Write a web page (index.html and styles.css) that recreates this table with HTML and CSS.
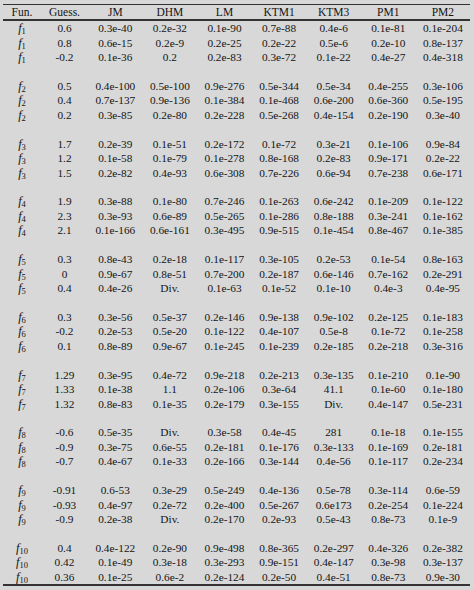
FILE: index.html
```html
<!DOCTYPE html>
<html>
<head>
<meta charset="utf-8">
<link rel="stylesheet" href="styles.css">
</head>
<body>
<table class="results">
<colgroup>
<col class="c-fun"><col class="c-guess"><col class="c-m"><col class="c-m"><col class="c-m"><col class="c-m"><col class="c-m"><col class="c-m"><col class="c-m">
</colgroup>
<thead>
<tr><th>Fun.</th><th>Guess.</th><th>JM</th><th>DHM</th><th>LM</th><th>KTM1</th><th>KTM3</th><th>PM1</th><th>PM2</th></tr>
</thead>
<tbody>
<tr><td><i>f</i><sub>1</sub></td><td>0.6</td><td>0.3e-40</td><td>0.2e-32</td><td>0.1e-90</td><td>0.7e-88</td><td>0.4e-6</td><td>0.1e-81</td><td>0.1e-204</td></tr>
<tr><td><i>f</i><sub>1</sub></td><td>0.8</td><td>0.6e-15</td><td>0.2e-9</td><td>0.2e-25</td><td>0.2e-22</td><td>0.5e-6</td><td>0.2e-10</td><td>0.8e-137</td></tr>
<tr><td><i>f</i><sub>1</sub></td><td>-0.2</td><td>0.1e-36</td><td>0.2</td><td>0.2e-83</td><td>0.3e-72</td><td>0.1e-22</td><td>0.4e-27</td><td>0.4e-318</td></tr>
<tr class="gap"><td colspan="9"></td></tr>
<tr><td><i>f</i><sub>2</sub></td><td>0.5</td><td>0.4e-100</td><td>0.5e-100</td><td>0.9e-276</td><td>0.5e-344</td><td>0.5e-34</td><td>0.4e-255</td><td>0.3e-106</td></tr>
<tr><td><i>f</i><sub>2</sub></td><td>0.4</td><td>0.7e-137</td><td>0.9e-136</td><td>0.1e-384</td><td>0.1e-468</td><td>0.6e-200</td><td>0.6e-360</td><td>0.5e-195</td></tr>
<tr><td><i>f</i><sub>2</sub></td><td>0.2</td><td>0.3e-85</td><td>0.2e-80</td><td>0.2e-228</td><td>0.5e-268</td><td>0.4e-154</td><td>0.2e-190</td><td>0.3e-40</td></tr>
<tr class="gap"><td colspan="9"></td></tr>
<tr><td><i>f</i><sub>3</sub></td><td>1.7</td><td>0.2e-39</td><td>0.1e-51</td><td>0.2e-172</td><td>0.1e-72</td><td>0.3e-21</td><td>0.1e-106</td><td>0.9e-84</td></tr>
<tr><td><i>f</i><sub>3</sub></td><td>1.2</td><td>0.1e-58</td><td>0.1e-79</td><td>0.1e-278</td><td>0.8e-168</td><td>0.2e-83</td><td>0.9e-171</td><td>0.2e-22</td></tr>
<tr><td><i>f</i><sub>3</sub></td><td>1.5</td><td>0.2e-82</td><td>0.4e-93</td><td>0.6e-308</td><td>0.7e-226</td><td>0.6e-94</td><td>0.7e-238</td><td>0.6e-171</td></tr>
<tr class="gap"><td colspan="9"></td></tr>
<tr><td><i>f</i><sub>4</sub></td><td>1.9</td><td>0.3e-88</td><td>0.1e-80</td><td>0.7e-246</td><td>0.1e-263</td><td>0.6e-242</td><td>0.1e-209</td><td>0.1e-122</td></tr>
<tr><td><i>f</i><sub>4</sub></td><td>2.3</td><td>0.3e-93</td><td>0.6e-89</td><td>0.5e-265</td><td>0.1e-286</td><td>0.8e-188</td><td>0.3e-241</td><td>0.1e-162</td></tr>
<tr><td><i>f</i><sub>4</sub></td><td>2.1</td><td>0.1e-166</td><td>0.6e-161</td><td>0.3e-495</td><td>0.9e-515</td><td>0.1e-454</td><td>0.8e-467</td><td>0.1e-385</td></tr>
<tr class="gap"><td colspan="9"></td></tr>
<tr><td><i>f</i><sub>5</sub></td><td>0.3</td><td>0.8e-43</td><td>0.2e-18</td><td>0.1e-117</td><td>0.3e-105</td><td>0.2e-53</td><td>0.1e-54</td><td>0.8e-163</td></tr>
<tr><td><i>f</i><sub>5</sub></td><td>0</td><td>0.9e-67</td><td>0.8e-51</td><td>0.7e-200</td><td>0.2e-187</td><td>0.6e-146</td><td>0.7e-162</td><td>0.2e-291</td></tr>
<tr><td><i>f</i><sub>5</sub></td><td>0.4</td><td>0.4e-26</td><td>Div.</td><td>0.1e-63</td><td>0.1e-52</td><td>0.1e-10</td><td>0.4e-3</td><td>0.4e-95</td></tr>
<tr class="gap"><td colspan="9"></td></tr>
<tr><td><i>f</i><sub>6</sub></td><td>0.3</td><td>0.3e-56</td><td>0.5e-37</td><td>0.2e-146</td><td>0.9e-138</td><td>0.9e-102</td><td>0.2e-125</td><td>0.1e-183</td></tr>
<tr><td><i>f</i><sub>6</sub></td><td>-0.2</td><td>0.2e-53</td><td>0.5e-20</td><td>0.1e-122</td><td>0.4e-107</td><td>0.5e-8</td><td>0.1e-72</td><td>0.1e-258</td></tr>
<tr><td><i>f</i><sub>6</sub></td><td>0.1</td><td>0.8e-89</td><td>0.9e-67</td><td>0.1e-245</td><td>0.1e-239</td><td>0.2e-185</td><td>0.2e-218</td><td>0.3e-316</td></tr>
<tr class="gap"><td colspan="9"></td></tr>
<tr><td><i>f</i><sub>7</sub></td><td>1.29</td><td>0.3e-95</td><td>0.4e-72</td><td>0.9e-218</td><td>0.2e-213</td><td>0.3e-135</td><td>0.1e-210</td><td>0.1e-90</td></tr>
<tr><td><i>f</i><sub>7</sub></td><td>1.33</td><td>0.1e-38</td><td>1.1</td><td>0.2e-106</td><td>0.3e-64</td><td>41.1</td><td>0.1e-60</td><td>0.1e-180</td></tr>
<tr><td><i>f</i><sub>7</sub></td><td>1.32</td><td>0.8e-83</td><td>0.1e-35</td><td>0.2e-179</td><td>0.3e-155</td><td>Div.</td><td>0.4e-147</td><td>0.5e-231</td></tr>
<tr class="gap"><td colspan="9"></td></tr>
<tr><td><i>f</i><sub>8</sub></td><td>-0.6</td><td>0.5e-35</td><td>Div.</td><td>0.3e-58</td><td>0.4e-45</td><td>281</td><td>0.1e-18</td><td>0.1e-155</td></tr>
<tr><td><i>f</i><sub>8</sub></td><td>-0.9</td><td>0.3e-75</td><td>0.6e-55</td><td>0.2e-181</td><td>0.1e-176</td><td>0.3e-133</td><td>0.1e-169</td><td>0.2e-181</td></tr>
<tr><td><i>f</i><sub>8</sub></td><td>-0.7</td><td>0.4e-67</td><td>0.1e-33</td><td>0.2e-166</td><td>0.3e-144</td><td>0.4e-56</td><td>0.1e-117</td><td>0.2e-234</td></tr>
<tr class="gap"><td colspan="9"></td></tr>
<tr><td><i>f</i><sub>9</sub></td><td>-0.91</td><td>0.6-53</td><td>0.3e-29</td><td>0.5e-249</td><td>0.4e-136</td><td>0.5e-78</td><td>0.3e-114</td><td>0.6e-59</td></tr>
<tr><td><i>f</i><sub>9</sub></td><td>-0.93</td><td>0.4e-97</td><td>0.2e-72</td><td>0.2e-400</td><td>0.5e-267</td><td>0.6e173</td><td>0.2e-254</td><td>0.1e-224</td></tr>
<tr><td><i>f</i><sub>9</sub></td><td>-0.9</td><td>0.2e-38</td><td>Div.</td><td>0.2e-170</td><td>0.2e-93</td><td>0.5e-43</td><td>0.8e-73</td><td>0.1e-9</td></tr>
<tr class="gap"><td colspan="9"></td></tr>
<tr><td><i>f</i><sub>10</sub></td><td>0.4</td><td>0.4e-122</td><td>0.2e-90</td><td>0.9e-498</td><td>0.8e-365</td><td>0.2e-297</td><td>0.4e-326</td><td>0.2e-382</td></tr>
<tr><td><i>f</i><sub>10</sub></td><td>0.42</td><td>0.1e-49</td><td>0.3e-18</td><td>0.3e-293</td><td>0.9e-151</td><td>0.4e-147</td><td>0.3e-98</td><td>0.3e-137</td></tr>
<tr class="last"><td><i>f</i><sub>10</sub></td><td>0.36</td><td>0.1e-25</td><td>0.6e-2</td><td>0.2e-124</td><td>0.2e-50</td><td>0.4e-51</td><td>0.8e-73</td><td>0.9e-30</td></tr>
</tbody>
</table>
</body>
</html>
```
FILE: styles.css
```css
html, body {
  margin: 0;
  padding: 0;
  background: #d8d8d8;
}
body {
  padding: 4px 0 0 3px;
  width: 474px;
  height: 590px;
  box-sizing: border-box;
  overflow: hidden;
}
.results {
  border-collapse: separate;
  border-spacing: 0;
  table-layout: fixed;
  width: 467px;
  font-family: "Liberation Serif", "Times New Roman", serif;
  color: #141414;
}
.c-fun { width: 38px; }
.c-guess { width: 47px; }
.c-m { width: 54.6px; }
.results th {
  font-weight: normal;
  font-size: 11.5px;
  height: 14px;
  line-height: 14px;
  padding: 0;
  text-align: center;
  border-top: 1px solid #333;
  border-bottom: 2px solid #333;
}
.results td {
  font-size: 11.3px;
  height: 14.44px;
  line-height: 14px;
  padding: 0;
  text-align: center;
  white-space: nowrap;
}
.results tr.last td {
  border-bottom: 2px solid #333;
}
.results td i {
  font-size: 12.5px;
}
.results td sub {
  font-size: 8.5px;
  vertical-align: -2px;
  line-height: 0;
}
```
